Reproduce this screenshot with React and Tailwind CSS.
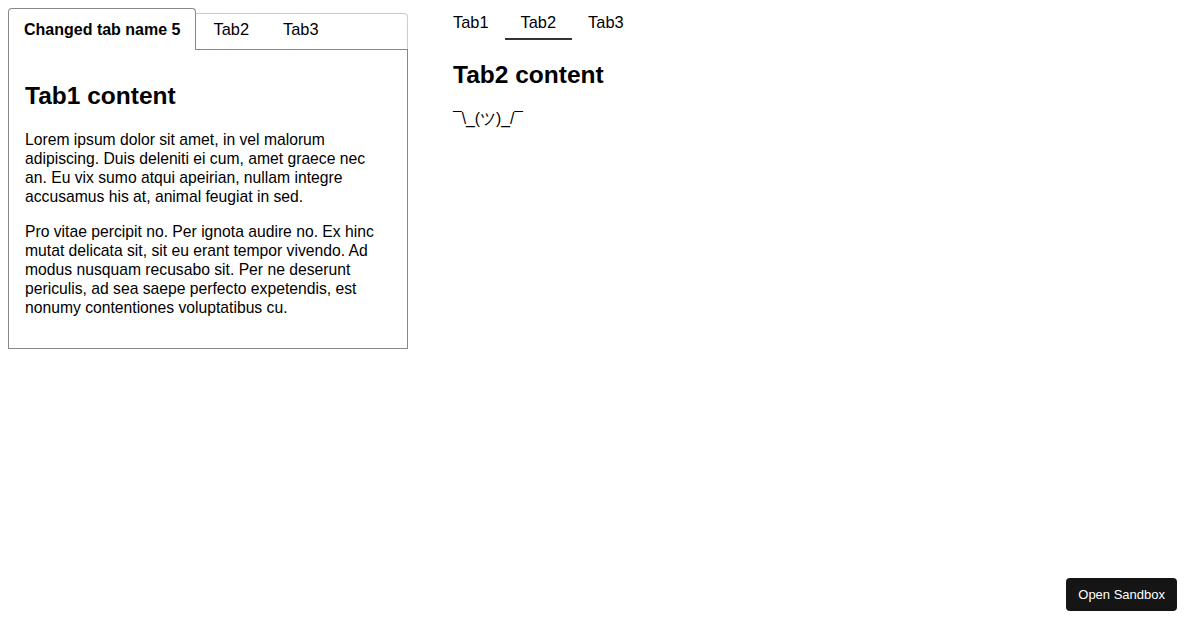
import { useState } from 'react';

const LOREM1 =
  'Lorem ipsum dolor sit amet, in vel malorum adipiscing. Duis deleniti ei cum, amet graece nec an. Eu vix sumo atqui apeirian, nullam integre accusamus his at, animal feugiat in sed.';
const LOREM2 =
  'Pro vitae percipit no. Per ignota audire no. Ex hinc mutat delicata sit, sit eu erant tempor vivendo. Ad modus nusquam recusabo sit. Per ne deserunt periculis, ad sea saepe perfecto expetendis, est nonumy contentiones voluptatibus cu.';

function BoxedTabs() {
  const [active, setActive] = useState(0);
  const tabs = ['Changed tab name 5', 'Tab2', 'Tab3'];

  return (
    <div className="w-[400px]">
      <div className="flex h-[41px]">
        {tabs.slice(0, active + 1).map((t, i) =>
          i === active ? (
            <button
              key={t}
              onClick={() => setActive(i)}
              className="relative z-10 -mb-px flex h-[42px] items-center rounded-t border border-b-0 border-[#888] bg-white px-[15px] text-[16px] font-bold"
            >
              {t}
            </button>
          ) : null
        )}
        <div className="mt-[5px] flex flex-1 items-center rounded-tr border-t border-r border-[#ccc] pb-[5px]">
          {tabs.slice(active + 1).map((t, i) => (
            <button key={t} onClick={() => setActive(active + 1 + i)} className="px-[17px] text-[16.4px]">
              {t}
            </button>
          ))}
        </div>
      </div>
      <div className="border border-[#888] px-4 pt-[12px] pb-[15px]">
        <h2 className="mt-5 mb-5 text-[24.5px] leading-[28px] font-bold">Tab{active + 1} content</h2>
        <p className="mb-4">{LOREM1}</p>
        <p className="mb-4">{LOREM2}</p>
      </div>
    </div>
  );
}

function LineTabs() {
  const [active, setActive] = useState(1);
  const tabs = ['Tab1', 'Tab2', 'Tab3'];

  return (
    <div className="ml-[29px]">
      <div className="flex">
        {tabs.map((t, i) => (
          <button
            key={t}
            onClick={() => setActive(i)}
            className={
              i === active
                ? 'border-b-2 border-[#333] px-4 pt-[5px] pb-[6px] text-[16.4px]'
                : 'border-b-2 border-transparent px-4 pt-[5px] pb-[6px] text-[16.4px]'
            }
          >
            {t}
          </button>
        ))}
      </div>
      <div className="px-4 pt-px">
        <h2 className="mt-5 mb-5 text-[24.5px] leading-[28px] font-bold">Tab{active + 1} content</h2>
        <p>¯\_(ツ)_/¯</p>
      </div>
    </div>
  );
}

export default function App() {
  return (
    <div className="min-h-[630px] bg-white font-['Liberation_Sans',Arial,sans-serif] text-[15.7px] leading-[19px] text-black">
      <div className="flex items-start p-2">
        <BoxedTabs />
        <LineTabs />
      </div>
      <button className="fixed right-[23px] bottom-[19px] h-[33px] rounded bg-[#151515] px-[12px] text-[13px] text-white">
        Open Sandbox
      </button>
    </div>
  );
}
